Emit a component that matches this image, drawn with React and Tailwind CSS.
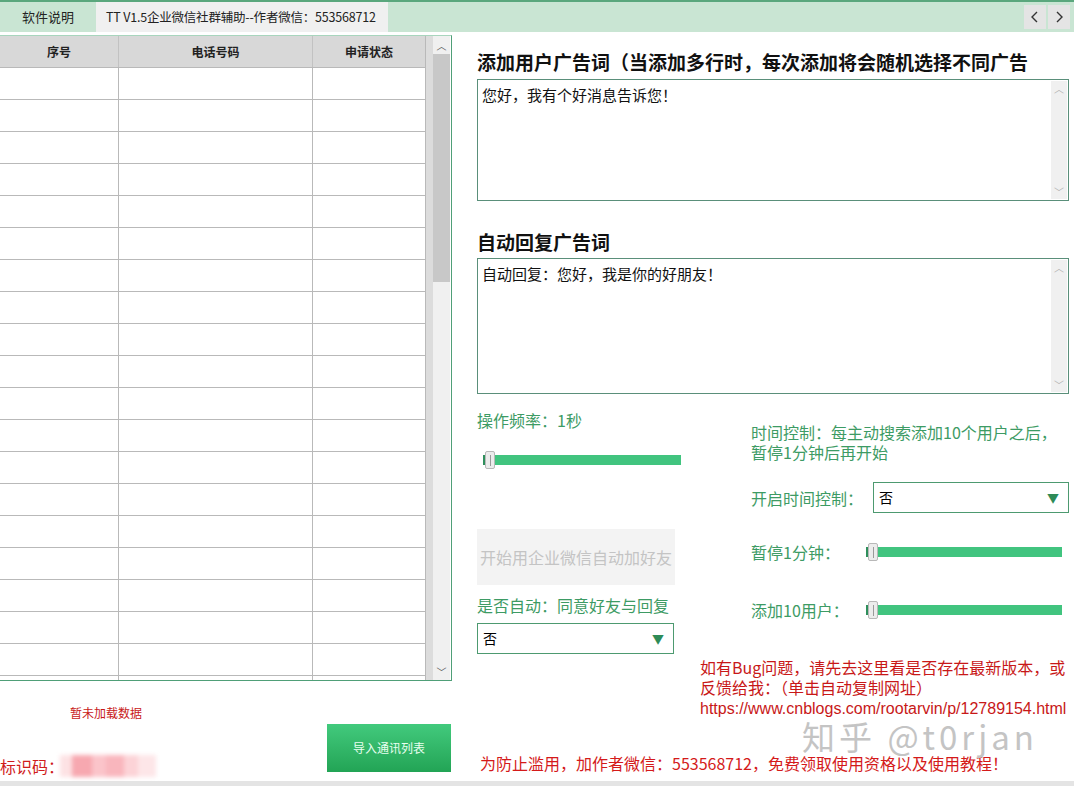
import React from "react";

const FONT = {
  fontFamily: '"Noto Sans CJK SC", "Liberation Sans", sans-serif',
};

const Chevron = ({ dir }) => (
  <svg width="10" height="12" viewBox="0 0 10 12" fill="none">
    <path
      d={dir === "left" ? "M7 1 L2 6 L7 11" : "M3 1 L8 6 L3 11"}
      stroke="#333"
      strokeWidth="1.4"
    />
  </svg>
);

const Slider = ({ width }) => (
  <div className="relative flex items-center h-[20px]" style={{ width }}>
    <div className="h-[10px] w-[3px] bg-[#2f8f5c]" />
    <div className="h-[10px] flex-1 bg-[#41c47f]" />
    <div className="absolute left-[2px] top-[1px] h-[18px] w-[10px] rounded-[2px] border border-[#b8b8b8] bg-[#ececec] flex justify-center">
      <div className="mt-[3px] h-[11px] w-[1px] bg-[#9a9a9a]" />
    </div>
  </div>
);

const Select = ({ className }) => (
  <div
    className={
      "flex items-center justify-between border border-[#4d9a70] bg-white pl-[5px] pr-[9px] " +
      className
    }
  >
    <span className="text-[14px] text-black">否</span>
    <span className="text-[12px] text-[#2e8b57]">▼</span>
  </div>
);

const TextBox = ({ text, height }) => (
  <div
    className="flex border border-[#5a8f7a] bg-white"
    style={{ height }}
  >
    <div className="flex-1 px-[4px] pt-[4px] text-[15px] leading-[22px] text-[#111]">
      {text}
    </div>
    <div className="w-[16px] my-[1px] mr-[1px] bg-[#f0f0f0] flex flex-col items-center justify-between text-[10px] text-[#b0b0b0]">
      <span>︿</span>
      <span>﹀</span>
    </div>
  </div>
);

const App = () => {
  const rows = Array.from({ length: 20 });
  return (
    <div
      className="w-[1074px] h-[786px] overflow-hidden bg-white relative flex flex-col"
      style={FONT}
    >
      {/* tab bar */}
      <div className="h-[32px] shrink-0 border-t-2 border-[#5aa77d] bg-[#c9e5d3] flex items-stretch">
        <div className="w-[96px] flex items-center justify-center text-[13px] text-[#222]">
          软件说明
        </div>
        <div className="w-[292px] bg-[#f0f0f0] flex items-center pl-[10px] text-[12.5px] tracking-[-0.2px] text-[#222] whitespace-nowrap overflow-hidden">
          TT V1.5企业微信社群辅助--作者微信：553568712
        </div>
        <div className="flex-1" />
        <div className="flex items-center gap-[2px] pr-[4px]">
          <div className="w-[22px] h-[24px] bg-[#e4e4e4] flex items-center justify-center">
            <Chevron dir="left" />
          </div>
          <div className="w-[22px] h-[24px] bg-[#e4e4e4] flex items-center justify-center">
            <Chevron dir="right" />
          </div>
        </div>
      </div>

      <div className="h-[3px] shrink-0" />

      <div className="flex flex-1 min-h-0">
        {/* left column */}
        <div className="w-[452px] shrink-0 flex flex-col">
          <div className="h-[646px] flex border-t border-t-[#a8d5bd] border-r border-b border-[#4f9f78] overflow-hidden">
            <div className="w-[426px] flex flex-col overflow-hidden border-r border-[#b9b9b9]">
              <div className="h-[32px] shrink-0 flex bg-[#d8d8d8] border-b border-[#b9b9b9] text-[12px] font-bold text-[#222]">
                <div className="w-[119px] flex items-center justify-center border-r border-[#c2c2c2]">
                  序号
                </div>
                <div className="w-[194px] flex items-center justify-center border-r border-[#c2c2c2]">
                  电话号码
                </div>
                <div className="flex-1 flex items-center justify-center">
                  申请状态
                </div>
              </div>
              {rows.map((_, i) => (
                <div
                  key={i}
                  className="h-[32px] shrink-0 flex border-b border-[#b9b9b9]"
                >
                  <div className="w-[119px] border-r border-[#b9b9b9]" />
                  <div className="w-[194px] border-r border-[#b9b9b9]" />
                  <div className="flex-1" />
                </div>
              ))}
            </div>
            <div className="w-[7px] bg-[#dcdcdc]" />
            <div className="w-[17px] bg-[#f0f0f0] flex flex-col">
              <div className="h-[18px] flex items-center justify-center text-[10px] text-[#555]">
                ︿
              </div>
              <div className="h-[228px] bg-[#c8c8c8]" />
              <div className="flex-1" />
              <div className="h-[18px] flex items-center justify-center text-[10px] text-[#555]">
                ﹀
              </div>
            </div>
          </div>

          <div className="flex-1 flex">
            <div className="w-[327px] flex flex-col">
              <div className="pl-[70px] pt-[24px] text-[12px] leading-[16px] text-[#c81818]">
                暂未加载数据
              </div>
              <div className="mt-[34px] flex items-center">
                <span className="text-[16px] leading-[22px] text-[#d01c1c]">
                  标识码：
                </span>
                <div className="ml-[-4px] flex h-[22px] w-[96px] blur-[2px]">
                  <div className="w-[12px] bg-[#fde2e4]" />
                  <div className="w-[20px] bg-[#f7a8b0]" />
                  <div className="w-[14px] bg-[#fbc4ca]" />
                  <div className="w-[18px] bg-[#f9b6bd]" />
                  <div className="w-[14px] bg-[#fcd3d7]" />
                  <div className="w-[18px] bg-[#fde6e8]" />
                </div>
              </div>
            </div>
            <div className="pt-[43px]">
              <div className="w-[124px] h-[48px] bg-gradient-to-b from-[#42ca7d] to-[#22a455] flex items-center justify-center text-[12px] text-[#e8fff0]">
                导入通讯列表
              </div>
            </div>
          </div>
        </div>

        {/* right column */}
        <div className="flex-1 flex flex-col pl-[25px] pr-[5px] relative">
          <div className="mt-[14px] h-[26px] text-[19px] font-bold leading-[26px] text-[#111] whitespace-nowrap overflow-hidden">
            添加用户广告词（当添加多行时，每次添加将会随机选择不同广告
          </div>
          <div className="mt-[4px]">
            <TextBox text="您好，我有个好消息告诉您！" height={122} />
          </div>
          <div className="mt-[28px] h-[26px] text-[19px] font-bold leading-[26px] text-[#111]">
            自动回复广告词
          </div>
          <div className="mt-[3px]">
            <TextBox text="自动回复：您好，我是你的好朋友！" height={136} />
          </div>

          <div className="flex mt-[16px]">
            <div className="w-[198px] flex flex-col">
              <div className="text-[16px] leading-[20px] text-[#3d9b64]">
                操作频率：1秒
              </div>
              <div className="mt-[20px] pl-[6px]">
                <Slider width={198} />
              </div>
              <div className="mt-[59px] h-[56px] w-[198px] bg-[#f3f3f3] flex items-center justify-center text-[16px] text-[#c4c4c4] whitespace-nowrap">
                开始用企业微信自动加好友
              </div>
              <div className="mt-[9px] text-[16px] leading-[22px] text-[#3d9b64] whitespace-nowrap">
                是否自动：同意好友与回复
              </div>
              <Select className="mt-[7px] h-[31px] w-[197px]" />
            </div>

            <div className="ml-[76px] flex-1 flex flex-col pt-[12px]">
              <div className="text-[16px] leading-[20px] text-[#3d9b64] whitespace-nowrap">
                时间控制：每主动搜索添加10个用户之后，
                <br />
                暂停1分钟后再开始
              </div>
              <div className="mt-[20px] flex items-center">
                <span className="w-[122px] text-[16px] text-[#3d9b64]">
                  开启时间控制：
                </span>
                <Select className="h-[31px] w-[196px]" />
              </div>
              <div className="mt-[27px] flex items-center">
                <span className="w-[115px] text-[16px] text-[#3d9b64]">
                  暂停1分钟：
                </span>
                <Slider width={196} />
              </div>
              <div className="mt-[34px] flex items-center">
                <span className="w-[115px] text-[16px] text-[#3d9b64]">
                  添加10用户：
                </span>
                <Slider width={196} />
              </div>
            </div>
          </div>

          <div className="ml-[223px] mt-[3px] text-[16px] leading-[20px] text-[#c81818] whitespace-nowrap">
            如有Bug问题，请先去这里看是否存在最新版本，或
            <br />
            反馈给我：（单击自动复制网址）
            <br />
            <span style={{ fontFamily: '"Liberation Sans", sans-serif' }}>
              https://www.cnblogs.com/rootarvin/p/12789154.html
            </span>
          </div>

          <div className="mt-[34px] ml-[3px] text-[16px] leading-[20px] text-[#d41a1a] whitespace-nowrap">
            为防止滥用，加作者微信：553568712，免费领取使用资格以及使用教程！
          </div>

          <div className="absolute left-[350px] top-[683px] text-[33px] leading-[36px] tracking-[4px] text-[#c4c4c4] whitespace-nowrap">
            知乎 @t0rjan
          </div>
        </div>
      </div>

      <div className="h-[5px] shrink-0 bg-[#e4e4e4]" />
    </div>
  );
};

export default App;
